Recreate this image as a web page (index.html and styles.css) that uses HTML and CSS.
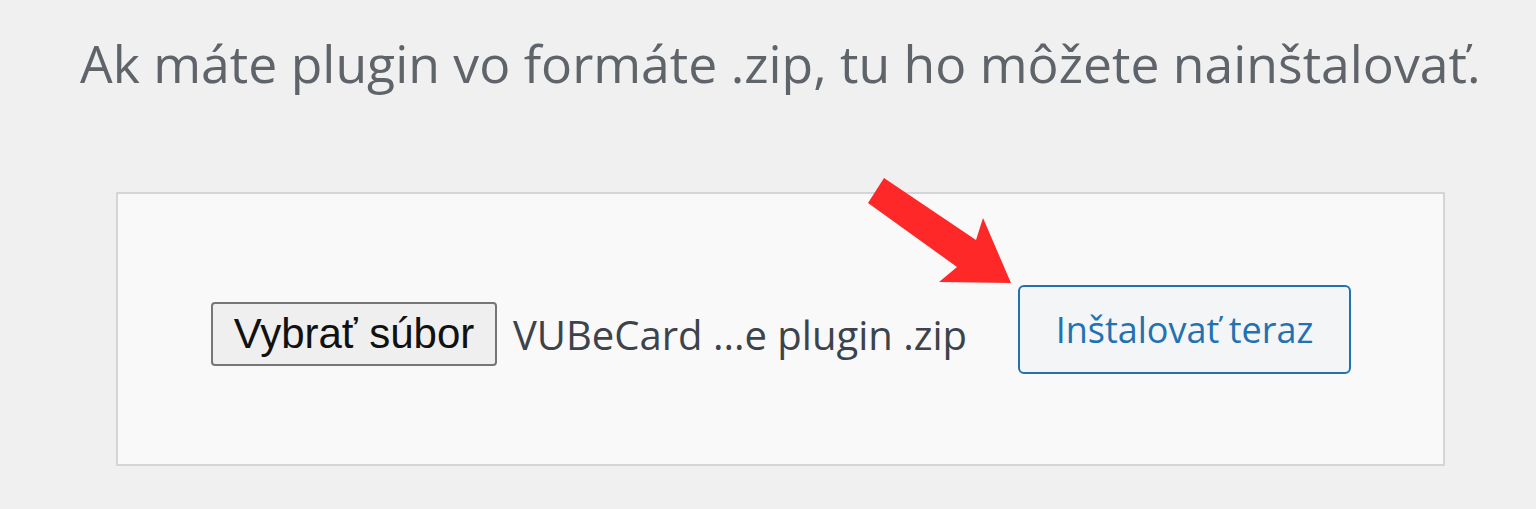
FILE: index.html
```html
<!DOCTYPE html>
<html lang="sk">
<head>
<meta charset="utf-8">
<title>Nahrať plugin</title>
<link rel="stylesheet" href="styles.css">
</head>
<body>
<main class="page">
  <p class="intro">Ak máte plugin vo formáte .zip, tu ho môžete nainštalovať.</p>
  <form class="upload-card">
    <span class="file-btn">Vybrať súbor</span>
    <span class="file-name">VUBeCard ...e plugin .zip</span>
    <span class="install-btn">Inštalovať teraz</span>
  </form>
  <svg class="arrow" width="1536" height="509" viewBox="0 0 1536 509" aria-hidden="true">
    <polygon points="884,178 976,240 983,218 1011,283 939,282 957,267 868,203" fill="#ff2828"/>
  </svg>
</main>
</body>
</html>
```

FILE: styles.css
```css
html, body {
  margin: 0;
  padding: 0;
  background: #f0f0f1;
}
.page {
  position: relative;
  width: 1536px;
  height: 509px;
  overflow: hidden;
  padding-top: 28px;
  box-sizing: border-box;
}
.intro {
  margin: 0 0 0 80px;
  font-family: "Open Sans", "Noto Sans", sans-serif;
  font-size: 51.7px;
  line-height: 70px;
  color: #5f646a;
  white-space: nowrap;
}
.upload-card {
  margin: 94px 0 0 116px;
  width: 1329px;
  height: 274px;
  box-sizing: border-box;
  border: 2px solid #d3d5d9;
  background: #f9f9f9;
  display: flex;
  align-items: center;
  padding-left: 93px;
}
.file-btn {
  box-sizing: border-box;
  height: 64px;
  width: 286px;
  border: 2px solid #767676;
  border-radius: 4px;
  background: #efefef;
  font-family: "Liberation Sans", Arial, sans-serif;
  font-size: 42px;
  color: #111;
  display: flex;
  align-items: center;
  justify-content: center;
  margin-top: 10px;
}
.file-name {
  margin-left: 16px;
  margin-top: 10px;
  font-family: "Open Sans", "Noto Sans", sans-serif;
  font-size: 40px;
  color: #3c434a;
  white-space: nowrap;
}
.install-btn {
  margin-left: 51px;
  box-sizing: border-box;
  width: 333px;
  height: 89px;
  border: 2px solid #2271b1;
  border-radius: 6px;
  background: #f4f5f7;
  color: #2271b1;
  font-family: "Open Sans", "Noto Sans", sans-serif;
  font-size: 36px;
  display: flex;
  align-items: center;
  justify-content: center;
}
.arrow {
  position: absolute;
  left: 0;
  top: 0;
}
```
